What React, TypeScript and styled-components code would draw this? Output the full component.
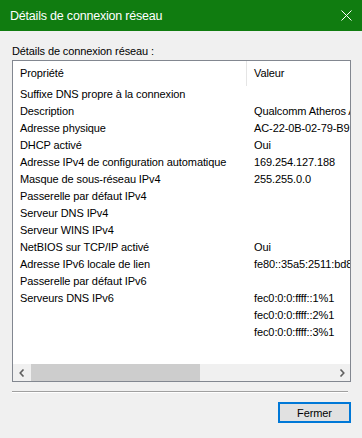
import styled, { createGlobalStyle } from 'styled-components';

const GlobalStyle = createGlobalStyle`
  html, body {
    margin: 0;
    padding: 0;
    background: #f0f0f0;
  }
  * {
    box-sizing: border-box;
  }
`;

const Window = styled.div`
  width: 362px;
  height: 438px;
  display: flex;
  flex-direction: column;
  background: #f0f0f0;
  font-family: 'Liberation Sans', Arial, sans-serif;
  font-size: 11px;
  letter-spacing: -0.1px;
  color: #000;
  overflow: hidden;
`;

const TitleBar = styled.div`
  height: 31px;
  flex-shrink: 0;
  display: flex;
  align-items: center;
  justify-content: space-between;
  padding: 0 10px 0 10px;
  background: #107c10;
  color: #fff;
`;

const TitleText = styled.div`
  font-size: 12.5px;
  letter-spacing: -0.2px;
`;

const CloseButton = styled.div`
  width: 12px;
  height: 12px;
  display: flex;
  align-items: center;
  justify-content: center;
`;

const Body = styled.div`
  flex: 1;
  display: flex;
  flex-direction: column;
  padding: 13px 11px 0 12px;
`;

const GroupLabel = styled.div`
  height: 15px;
  line-height: 15px;
  margin-bottom: 1px;
`;

const ListBox = styled.div`
  height: 322px;
  border: 1px solid #828790;
  background: #fff;
  display: flex;
  flex-direction: column;
  overflow: hidden;
`;

const Viewport = styled.div`
  flex: 1;
  overflow: hidden;
`;

const Table = styled.div`
  display: grid;
  grid-template-columns: 234px 200px;
  width: 434px;
`;

const HeaderCell = styled.div<{ $last?: boolean }>`
  height: 25px;
  line-height: 25px;
  padding-left: 7px;
  border-right: ${(p) => (p.$last ? 'none' : '1px solid #e5e5e5')};
  white-space: nowrap;
  overflow: hidden;
`;

const Cell = styled.div`
  height: 17px;
  line-height: 17px;
  padding-left: 7px;
  white-space: nowrap;
  overflow: hidden;
`;

const ScrollBar = styled.div`
  height: 17px;
  flex-shrink: 0;
  display: flex;
  align-items: stretch;
  background: #f0f0f0;
`;

const ArrowButton = styled.div`
  width: 17px;
  display: flex;
  align-items: center;
  justify-content: center;
`;

const Track = styled.div`
  flex: 1;
  display: flex;
  align-items: stretch;
  padding: 0 1px;
`;

const Thumb = styled.div`
  background: #cdcdcd;
`;

const Separator = styled.div`
  margin: 9px 3px 0 0;
  height: 1px;
  background: #a0a0a0;
  box-shadow: 0 1px 0 #fff;
`;

const Footer = styled.div`
  display: flex;
  justify-content: flex-end;
  padding-top: 10px;
`;

const Button = styled.button`
  width: 73px;
  height: 21px;
  border: 2px solid #0078d7;
  background: #e1e1e1;
  font-family: inherit;
  font-size: 11px;
  letter-spacing: -0.1px;
  color: #000;
  padding: 0;
`;

const rows: [string, string][] = [
  ['Suffixe DNS propre à la connexion', ''],
  ['Description', 'Qualcomm Atheros AR956x Wireless Network Adapter'],
  ['Adresse physique', 'AC-22-0B-02-79-B9'],
  ['DHCP activé', 'Oui'],
  ['Adresse IPv4 de configuration automatique', '169.254.127.188'],
  ['Masque de sous-réseau IPv4', '255.255.0.0'],
  ['Passerelle par défaut IPv4', ''],
  ['Serveur DNS IPv4', ''],
  ['Serveur WINS IPv4', ''],
  ['NetBIOS sur TCP/IP activé', 'Oui'],
  ['Adresse IPv6 locale de lien', 'fe80::35a5:2511:bd8f:7fbc%12'],
  ['Passerelle par défaut IPv6', ''],
  ['Serveurs DNS IPv6', 'fec0:0:0:ffff::1%1'],
  ['', 'fec0:0:0:ffff::2%1'],
  ['', 'fec0:0:0:ffff::3%1'],
];

const Chevron = ({ dir }: { dir: 'left' | 'right' }) => (
  <svg width="6" height="8" viewBox="0 0 6 8">
    <path
      d={dir === 'left' ? 'M4.5 0.5 L1.2 4 L4.5 7.5' : 'M1.5 0.5 L4.8 4 L1.5 7.5'}
      fill="none"
      stroke="#606060"
      strokeWidth="1.6"
    />
  </svg>
);

export default function App() {
  return (
    <>
      <GlobalStyle />
      <Window>
        <TitleBar>
          <TitleText>Détails de connexion réseau</TitleText>
          <CloseButton>
            <svg width="11" height="11" viewBox="0 0 11 11">
              <path d="M0.5 0.5 L10.5 10.5 M10.5 0.5 L0.5 10.5" stroke="#fff" strokeWidth="1" />
            </svg>
          </CloseButton>
        </TitleBar>
        <Body>
          <GroupLabel>Détails de connexion réseau :</GroupLabel>
          <ListBox>
            <Viewport>
              <Table>
                <HeaderCell>Propriété</HeaderCell>
                <HeaderCell $last>Valeur</HeaderCell>
                {rows.flatMap(([name, value], i) => [
                  <Cell key={`n${i}`}>{name}</Cell>,
                  <Cell key={`v${i}`}>{value}</Cell>,
                ])}
              </Table>
            </Viewport>
            <ScrollBar>
              <ArrowButton>
                <Chevron dir="left" />
              </ArrowButton>
              <Track>
                <Thumb style={{ width: '169px' }} />
              </Track>
              <ArrowButton>
                <Chevron dir="right" />
              </ArrowButton>
            </ScrollBar>
          </ListBox>
          <Separator />
          <Footer>
            <Button>Fermer</Button>
          </Footer>
        </Body>
      </Window>
    </>
  );
}
